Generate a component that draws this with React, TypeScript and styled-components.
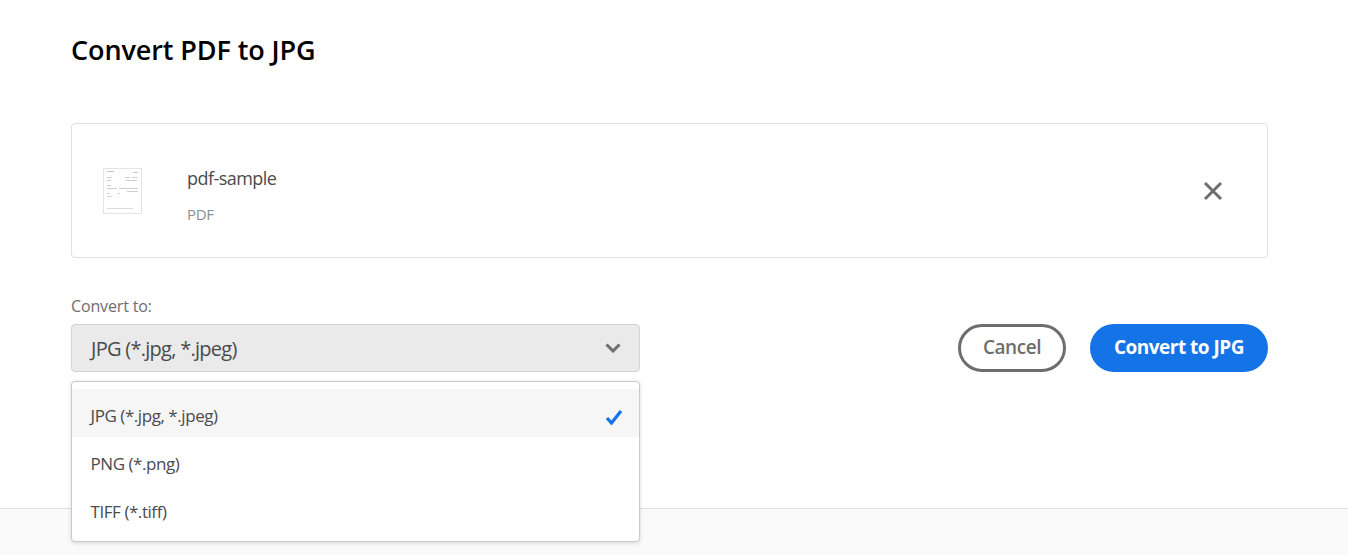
import React from 'react';
import styled, { createGlobalStyle } from 'styled-components';

const GlobalStyle = createGlobalStyle`
  html, body {
    margin: 0;
    padding: 0;
    background: #fff;
    font-family: 'Open Sans', 'Noto Sans', Arial, sans-serif;
  }
`;

const Page = styled.div`
  height: 555px;
  display: flex;
  flex-direction: column;
  overflow: hidden;
`;

const Main = styled.main`
  height: 508px;
  box-sizing: border-box;
  padding: 34px 80px 0 71px;
`;

const Title = styled.h1`
  margin: 0;
  font-size: 27px;
  line-height: 32px;
  font-weight: 600;
  color: #000;
  letter-spacing: -0.1px;
`;

const FileCard = styled.section`
  margin-top: 57px;
  height: 135px;
  box-sizing: border-box;
  border: 1px solid #e1e1e1;
  border-radius: 4px;
  display: flex;
  align-items: center;
  padding: 0 44px 0 31px;
`;

const ThumbnailImage = styled.svg`
  filter: blur(0.5px);
`;

const FileInfo = styled.div`
  margin: 9px 0 0 45px;
  flex: 1;
  display: flex;
  flex-direction: column;
  gap: 14px;
`;

const FileName = styled.div`
  font-size: 18px;
  line-height: 24px;
  color: #4b4b4b;
  letter-spacing: -0.55px;
`;

const FileType = styled.div`
  font-size: 15px;
  line-height: 20px;
  color: #8e8e8e;
  letter-spacing: -0.3px;
`;

const CloseButton = styled.button`
  border: 0;
  background: none;
  padding: 0;
  display: flex;
  color: #6e6e6e;
`;

const ConvertRow = styled.section`
  margin-top: 38px;
  display: flex;
  align-items: flex-end;
  justify-content: space-between;
`;

const Field = styled.div`
  position: relative;
  width: 569px;
`;

const FieldLabel = styled.div`
  font-size: 16px;
  line-height: 20px;
  color: #6e6e6e;
  letter-spacing: -0.15px;
  margin-bottom: 8px;
`;

const SelectBox = styled.div`
  height: 48px;
  box-sizing: border-box;
  background: #eaeaea;
  border: 1px solid #d3d3d3;
  border-radius: 4px;
  display: flex;
  align-items: center;
  justify-content: space-between;
  padding: 0 18px 0 19px;
  font-size: 20px;
  color: #4b4b4b;
  letter-spacing: -0.72px;
`;

const Menu = styled.ul`
  position: absolute;
  top: 85px;
  left: 0;
  right: 0;
  height: 161px;
  box-sizing: border-box;
  margin: 0;
  padding: 7px 0 0;
  list-style: none;
  background: #fff;
  border: 1px solid #cacaca;
  border-radius: 4px;
  box-shadow: 0 1px 4px rgba(0, 0, 0, 0.15);
`;

const MenuItem = styled.li<{ $selected?: boolean }>`
  height: 48px;
  box-sizing: border-box;
  display: flex;
  align-items: center;
  justify-content: space-between;
  padding: 4px 16px 0 18.5px;
  font-size: 17px;
  color: #4b4b4b;
  letter-spacing: -0.44px;
  background: ${props => (props.$selected ? '#f6f6f6' : 'transparent')};

  svg {
    margin-top: 4px;
  }
`;

const Actions = styled.div`
  display: flex;
  gap: 24px;
`;

const Button = styled.button<{ $primary?: boolean }>`
  height: 48px;
  box-sizing: border-box;
  border-radius: 24px;
  font-family: inherit;
  font-size: 19px;
  font-weight: ${props => (props.$primary ? 700 : 600)};
  letter-spacing: ${props => (props.$primary ? '-0.5px' : '-0.45px')};
  padding: 0 0 2px;
  width: ${props => (props.$primary ? '178px' : '108px')};
  color: ${props => (props.$primary ? '#fff' : '#6e6e6e')};
  background: ${props => (props.$primary ? '#1473e6' : '#fff')};
  border: ${props => (props.$primary ? '0' : '3px solid #6e6e6e')};
`;

const Footer = styled.footer`
  flex: 1;
  background: #fafafa;
  border-top: 1px solid #e1e1e1;
`;

const Thumbnail = () => (
  <ThumbnailImage width="39" height="46" viewBox="0 0 39 46">
    <rect x="0.5" y="0.5" width="38" height="45" fill="#fff" stroke="#e4e4e4" />
    <g stroke="#c4c4c4" strokeWidth="1">
      <path d="M4 3.5h7M30 4.5h5" />
      <path d="M4 9.5h5M4 12.5h4M22 9.5h5M29 9.5h6M23 12.5h11" opacity="0.8" />
      <path d="M4 17.5h4M4 20.5h10M16 20.5h19M24 23.5h11" opacity="0.8" />
      <path d="M4 25.5h3M14 25.5h3M4 28.5h5" opacity="0.7" />
      <path d="M4 40.5h26" opacity="0.6" />
    </g>
  </ThumbnailImage>
);

const App: React.FC = () => (
  <Page>
    <GlobalStyle />
    <Main>
      <Title>Convert PDF to JPG</Title>
      <FileCard>
        <Thumbnail />
        <FileInfo>
          <FileName>pdf-sample</FileName>
          <FileType>PDF</FileType>
        </FileInfo>
        <CloseButton aria-label="Remove">
          <svg width="20" height="20" viewBox="0 0 20 20" fill="none" stroke="currentColor" strokeWidth="3">
            <path d="M2 2l16 16M18 2L2 18" />
          </svg>
        </CloseButton>
      </FileCard>
      <ConvertRow>
        <Field>
          <FieldLabel>Convert to:</FieldLabel>
          <SelectBox>
            JPG (*.jpg, *.jpeg)
            <svg width="16" height="10" viewBox="0 0 16 10" fill="none" stroke="#6e6e6e" strokeWidth="3">
              <path d="M1.5 1.5L8 8l6.5-6.5" />
            </svg>
          </SelectBox>
          <Menu>
            <MenuItem $selected>
              JPG (*.jpg, *.jpeg)
              <svg width="18" height="16" viewBox="0 0 18 16" fill="none" stroke="#1473e6" strokeWidth="3.2">
                <path d="M2 9l4.5 5L16 2" />
              </svg>
            </MenuItem>
            <MenuItem>PNG (*.png)</MenuItem>
            <MenuItem>TIFF (*.tiff)</MenuItem>
          </Menu>
        </Field>
        <Actions>
          <Button>Cancel</Button>
          <Button $primary>Convert to JPG</Button>
        </Actions>
      </ConvertRow>
    </Main>
    <Footer />
  </Page>
);

export default App;
